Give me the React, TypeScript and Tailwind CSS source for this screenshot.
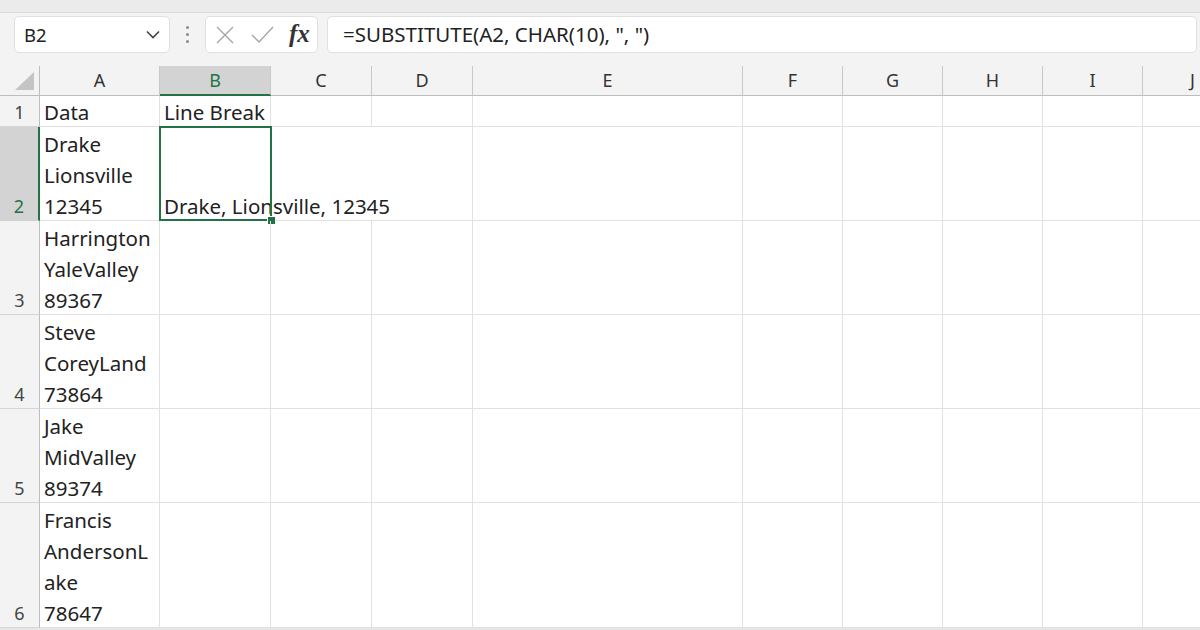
import React from "react";

const cols = ["A", "B", "C", "D", "E", "F", "G", "H", "I", "J"];

interface Row {
  n: number;
  a: string[];
  b?: string;
}

const rows: Row[] = [
  { n: 1, a: ["Data"], b: "Line Break" },
  { n: 2, a: ["Drake", "Lionsville", "12345"], b: "Drake, Lionsville, 12345" },
  { n: 3, a: ["Harrington", "YaleValley", "89367"] },
  { n: 4, a: ["Steve", "CoreyLand", "73864"] },
  { n: 5, a: ["Jake", "MidValley", "89374"] },
  { n: 6, a: ["Francis", "AndersonL", "ake", "78647"] },
];

function FormulaBar() {
  return (
    <div className="h-[53px] flex items-start pt-[3px] bg-[#f3f3f3]">
      {/* Name box */}
      <div className="ml-[14px] w-[156px] h-[37px] bg-white border border-[#e0e0e0] rounded-[5px] flex items-center justify-between pl-[9px] pr-[9px]">
        <span className="text-[18.5px] text-[#222]">B2</span>
        <svg width="14" height="9" viewBox="0 0 14 9" fill="none">
          <path d="M1 1.5l6 6 6-6" stroke="#444" strokeWidth="1.6" />
        </svg>
      </div>
      <div className="w-[35px] h-[37px] flex flex-col items-center justify-center gap-[4px]">
        <span className="w-[3px] h-[3px] rounded-full bg-[#8a8a8a]" />
        <span className="w-[3px] h-[3px] rounded-full bg-[#8a8a8a]" />
        <span className="w-[3px] h-[3px] rounded-full bg-[#8a8a8a]" />
      </div>
      {/* Cancel / enter / fx */}
      <div className="w-[113px] h-[37px] bg-white border border-[#e0e0e0] rounded-[5px] flex items-center pl-[10px]">
        <svg width="18" height="18" viewBox="0 0 18 18" fill="none">
          <path d="M1 1L17 17M17 1L1 17" stroke="#a3a3a3" strokeWidth="1.3" />
        </svg>
        <svg className="ml-[17px]" width="23" height="17" viewBox="0 0 23 17" fill="none">
          <path d="M1 9L8 16L22 1" stroke="#a3a3a3" strokeWidth="1.3" />
        </svg>
        <span className="ml-[15px] font-['Liberation_Serif',serif] italic font-bold text-[25px] leading-none text-[#333] -mt-[2px]">
          fx
        </span>
      </div>
      {/* Formula input */}
      <div className="ml-[9px] flex-1 mr-[3px] h-[37px] bg-white border border-[#e0e0e0] rounded-[5px] flex items-center pl-[15px]">
        <span className="text-[20.5px] text-[#222]">=SUBSTITUTE(A2, CHAR(10), ", ")</span>
      </div>
    </div>
  );
}

export default function App() {
  return (
    <div className="w-[1200px] h-[630px] overflow-hidden bg-[#f3f3f3] font-['Noto_Sans',sans-serif]">
      <div className="h-[13px] bg-[#ebebeb] border-b border-[#dcdcdc]" />
      <FormulaBar />

      <div className="grid grid-cols-[40px_120px_111px_101px_101px_270px_100px_100px_100px_100px_100px] grid-rows-[30px_31px_94px_94px_94px_94px_125px] w-[1243px] bg-white">
        {/* Corner */}
        <div className="bg-[#f3f3f3] border-r border-b border-[#bdbdbd] flex items-end justify-end pr-[5px] pb-[5px]">
          <svg width="19" height="18" viewBox="0 0 19 18">
            <polygon points="19,0 19,18 0,18" fill="#c4c4c4" />
          </svg>
        </div>

        {/* Column headers */}
        {cols.map((c) =>
          c === "B" ? (
            <div
              key={c}
              className="bg-[#d3d3d3] border-r border-[#c8c8c8] border-b-2 border-b-[#217346] flex items-center justify-center text-[18px] text-[#217346]"
            >
              {c}
            </div>
          ) : (
            <div
              key={c}
              className="bg-[#f3f3f3] border-r border-[#c8c8c8] border-b border-b-[#bdbdbd] flex items-center justify-center text-[18px] text-[#333]"
            >
              {c}
            </div>
          )
        )}

        {/* Rows */}
        {rows.map((r) => {
          const sel = r.n === 2;
          return (
            <React.Fragment key={r.n}>
              <div
                className={
                  sel
                    ? "bg-[#d3d3d3] border-r-2 border-[#217346] border-b border-b-[#d0d0d0] flex items-end justify-center text-[18px] leading-[31px] text-[#217346]"
                    : "bg-[#f3f3f3] border-r border-[#bdbdbd] border-b border-b-[#d6d6d6] flex items-end justify-center text-[18px] leading-[31px] text-[#444]"
                }
              >
                <span className="translate-y-[2px]">{r.n}</span>
              </div>

              {/* A */}
              <div className="border-r border-b border-[#e1e1e1] flex flex-col justify-end pl-[4px] text-[20.5px] leading-[31px] text-[#222]">
                {r.a.map((line, i) => (
                  <div key={i} className="whitespace-nowrap translate-y-[2px]">
                    {line}
                  </div>
                ))}
              </div>

              {/* B */}
              <div className="relative border-r border-b border-[#e1e1e1] flex flex-col justify-end pl-[4px] text-[20.5px] leading-[31px] text-[#222]">
                {r.b && <div className="whitespace-nowrap translate-y-[2px]">{r.b}</div>}
                {sel && (
                  <>
                    <div className="absolute -left-px -top-px right-[-2px] -bottom-px border-2 border-[#217346]" />
                    <div className="absolute right-[-6px] bottom-[-5px] w-[9px] h-[9px] bg-[#217346] border border-white" />
                  </>
                )}
              </div>

              {/* C..J */}
              {cols.slice(2).map((c) => (
                <div
                  key={c}
                  className={
                    sel && c === "C"
                      ? "border-b border-[#e1e1e1]"
                      : "border-r border-b border-[#e1e1e1]"
                  }
                />
              ))}
            </React.Fragment>
          );
        })}
      </div>
      <div className="h-[2px] bg-[#e6e6e6]" />
    </div>
  );
}
